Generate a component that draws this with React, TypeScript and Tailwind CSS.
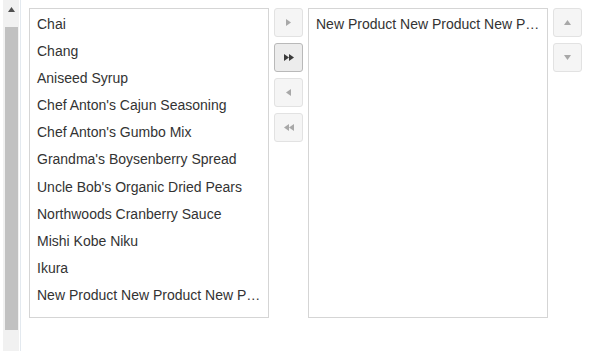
import React from "react";

const leftItems = [
  "Chai",
  "Chang",
  "Aniseed Syrup",
  "Chef Anton's Cajun Seasoning",
  "Chef Anton's Gumbo Mix",
  "Grandma's Boysenberry Spread",
  "Uncle Bob's Organic Dried Pears",
  "Northwoods Cranberry Sauce",
  "Mishi Kobe Niku",
  "Ikura",
  "New Product New Product New Product New Product",
];

const rightItems = ["New Product New Product New Product New Product"];

type Dir = "right" | "left" | "up" | "down";

function Tri({ dir, color }: { dir: Dir; color: string }) {
  const pts: Record<Dir, string> = {
    right: "0,0 5,3.5 0,7",
    left: "5,0 0,3.5 5,7",
    up: "0,5 3.5,0 7,5",
    down: "0,0 3.5,5 7,0",
  };
  const horiz = dir === "right" || dir === "left";
  return (
    <svg width={horiz ? 5 : 7} height={horiz ? 7 : 5} viewBox={horiz ? "0 0 5 7" : "0 0 7 5"}>
      <polygon points={pts[dir]} fill={color} />
    </svg>
  );
}

function ToolButton({ icons, active }: { icons: Dir[]; active?: boolean }) {
  const color = active ? "#3a3a3a" : "#a8a8a8";
  return (
    <button
      className={
        active
          ? "w-[29px] h-[29px] rounded-[3px] border border-[#b9b9b9] bg-[#ececec] flex items-center justify-center"
          : "w-[29px] h-[29px] rounded-[3px] border border-[#e2e2e2] bg-[#f5f5f5] flex items-center justify-center"
      }
    >
      {icons.map((d, i) => (
        <Tri key={i} dir={d} color={color} />
      ))}
    </button>
  );
}

function ListBox({ items }: { items: string[] }) {
  return (
    <ul className="w-[240px] h-[310px] border border-[#d5d5d5] bg-white pt-[1.5px]">
      {items.map((it) => (
        <li
          key={it}
          className="h-[27.2px] leading-[27.2px] px-[7px] text-[14px] text-[#333] whitespace-nowrap overflow-hidden text-ellipsis"
        >
          {it}
        </li>
      ))}
    </ul>
  );
}

export default function App() {
  return (
    <div
      className="flex h-[351px] w-[599px] bg-white"
      style={{ fontFamily: '"Liberation Sans", Arial, sans-serif' }}
    >
      {/* scrollbar fragment of the host page */}
      <div className="w-[21px] pl-[3px] border-r border-[#e3e9ef] flex">
        <div className="w-[16px] h-full bg-[#f1f1f1] flex flex-col items-center">
          <div className="h-[20px] pt-[7px]">
            <Tri dir="up" color="#505050" />
          </div>
          <div className="w-[13px] ml-[1px] mt-[7px] h-[303px] bg-[#c1c1c1]" />
        </div>
      </div>

      <div className="flex items-start gap-[5px] pt-2 pl-2">
        <ListBox items={leftItems} />
        <div className="flex flex-col gap-[6px]">
          <ToolButton icons={["right"]} />
          <ToolButton icons={["right", "right"]} active />
          <ToolButton icons={["left"]} />
          <ToolButton icons={["left", "left"]} />
        </div>
        <ListBox items={rightItems} />
        <div className="flex flex-col gap-[6px]">
          <ToolButton icons={["up"]} />
          <ToolButton icons={["down"]} />
        </div>
      </div>
    </div>
  );
}
